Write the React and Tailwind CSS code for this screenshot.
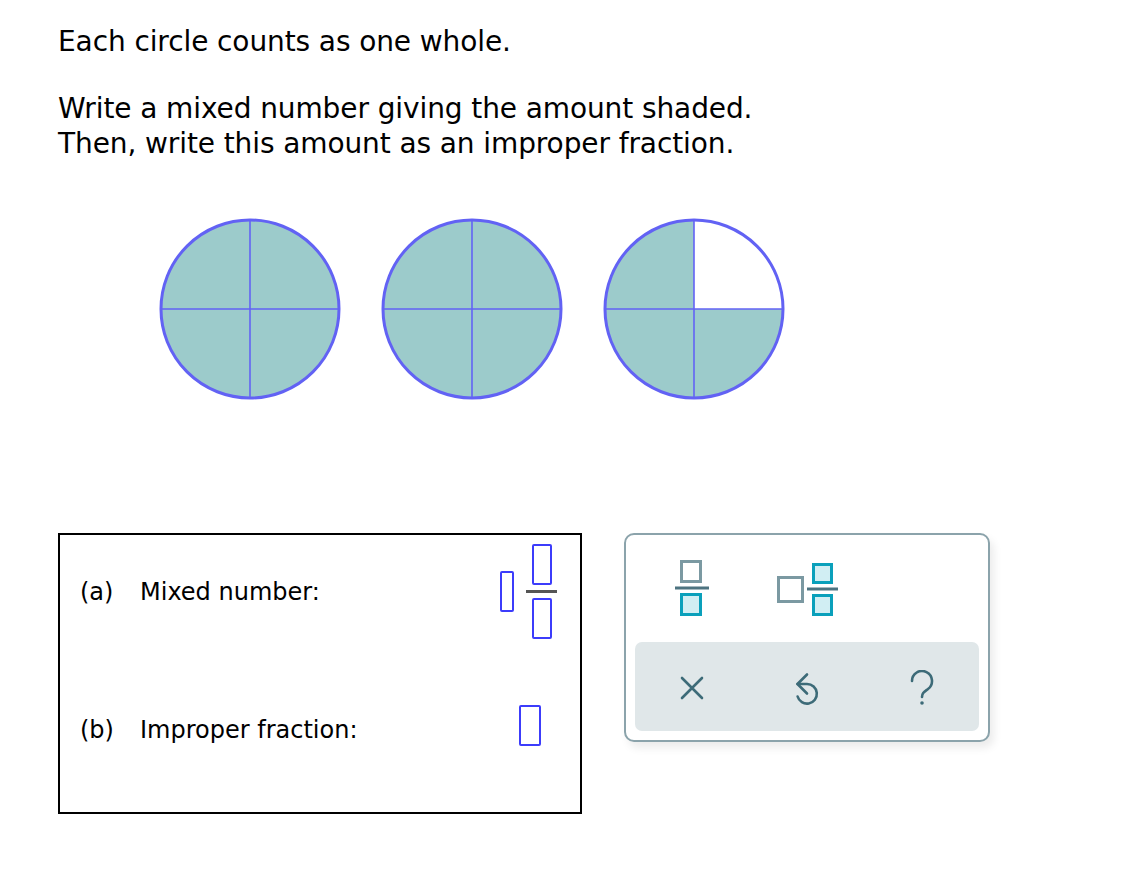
import React from 'react';

const Circle = ({ missing }) => (
  <svg width="182" height="182" viewBox="0 0 182 182">
    <circle cx="91" cy="91" r="89" fill="#9ccbcb" />
    {missing && <path d="M91 91 L91 2 A89 89 0 0 1 180 91 Z" fill="#ffffff" />}
    <line x1="91" y1="2" x2="91" y2="180" stroke="#6262f4" strokeWidth="1.6" />
    <line x1="2" y1="91" x2="180" y2="91" stroke="#6262f4" strokeWidth="1.6" />
    <circle cx="91" cy="91" r="89" fill="none" stroke="#6262f4" strokeWidth="3" />
  </svg>
);

const Slot = ({ className }) => (
  <div className={`border-[2.5px] border-[#3c3cfb] rounded-[2px] bg-white ${className}`} />
);

const FracKey = () => (
  <svg width="36" height="58" viewBox="0 0 36 58">
    <rect x="7.5" y="1.5" width="19" height="20" fill="#fff" stroke="#7b99a2" strokeWidth="3" />
    <line x1="1" y1="28" x2="35" y2="28" stroke="#4d7380" strokeWidth="3" />
    <rect x="7.5" y="34.5" width="19" height="20" fill="#d1eef3" stroke="#0aa0bb" strokeWidth="3" />
  </svg>
);

const MixedKey = () => (
  <svg width="62" height="54" viewBox="0 0 62 54">
    <rect x="1.5" y="14.5" width="24" height="24" fill="#fff" stroke="#7b99a2" strokeWidth="3" />
    <rect x="36.5" y="1.5" width="18" height="18" fill="#d1eef3" stroke="#0aa0bb" strokeWidth="3" />
    <line x1="30" y1="26" x2="61" y2="26" stroke="#4d7380" strokeWidth="3" />
    <rect x="36.5" y="32.5" width="18" height="19" fill="#d1eef3" stroke="#0aa0bb" strokeWidth="3" />
  </svg>
);

const iconStroke = '#3d6b78';

export default function App() {
  return (
    <div className="min-h-screen bg-white pl-[58px] pt-[24px] text-black" style={{ fontFamily: '"DejaVu Sans", Verdana, sans-serif' }}>
      <div className="text-[28px] leading-[35px] tracking-[-0.1px]">
        <p>Each circle counts as one whole.</p>
        <p className="mt-[32px]">Write a mixed number giving the amount shaded.</p>
        <p>Then, write this amount as an improper fraction.</p>
      </div>

      <div className="flex gap-[40px] ml-[101px] mt-[57px]">
        <Circle />
        <Circle />
        <Circle missing />
      </div>

      <div className="flex items-start gap-[42px] mt-[133px]">
        {/* answer box */}
        <div className="w-[524px] h-[281px] border-2 border-black pl-[20px] pt-[9px]">
          <div className="flex items-center h-[95px]">
            <div className="w-[420px] flex text-[24px]">
              <span className="w-[60px]">(a)</span>
              <span>Mixed number:</span>
            </div>
            <div className="flex items-center gap-[12px]">
              <Slot className="w-[14px] h-[41px]" />
              <div className="flex flex-col items-center gap-[5px]">
                <Slot className="w-[20px] h-[41px]" />
                <div className="w-[31px] h-[3px] bg-[#555]" />
                <Slot className="w-[20px] h-[41px]" />
              </div>
            </div>
          </div>
          <div className="flex items-center h-[41px] mt-[66px]">
            <div className="w-[439px] flex text-[24px] pt-[8px]">
              <span className="w-[60px]">(b)</span>
              <span>Improper fraction:</span>
            </div>
            <Slot className="w-[22px] h-[41px]" />
          </div>
        </div>

        {/* keypad */}
        <div className="w-[366px] h-[209px] border-2 border-[#8ba3ab] rounded-[10px] bg-white px-[9px] pb-[9px] shadow-[4px_6px_8px_rgba(0,0,0,0.08)] flex flex-col">
          <div className="grid grid-cols-3 h-[107px] items-center">
            <div className="flex justify-center"><FracKey /></div>
            <div className="flex justify-center pt-[2px] pl-[2px]"><MixedKey /></div>
            <div />
          </div>
          <div className="flex-1 grid grid-cols-3 items-center bg-[#e0e7e9] rounded-[7px]">
            <div className="flex justify-center pt-[2px]">
              <svg width="26" height="26" viewBox="0 0 26 26">
                <path d="M3 3 L23 23 M23 3 L3 23" stroke={iconStroke} strokeWidth="2.6" strokeLinecap="round" />
              </svg>
            </div>
            <div className="flex justify-center pt-[4px]">
              <svg width="30" height="34" viewBox="0 0 30 34">
                <path d="M15 2.5 L5.5 12 L15 21.5" fill="none" stroke={iconStroke} strokeWidth="2.6" strokeLinecap="round" strokeLinejoin="round" />
                <path d="M5.5 12 H15 A9.8 9.8 0 1 1 5.6 24.5" fill="none" stroke={iconStroke} strokeWidth="2.6" strokeLinecap="round" />
              </svg>
            </div>
            <div className="flex justify-center pt-[2px]">
              <svg width="26" height="36" viewBox="0 0 26 36">
                <path d="M3 11 A10 10 0 1 1 19 19 C15 22 13 23 13 27" fill="none" stroke={iconStroke} strokeWidth="2.6" strokeLinecap="round" />
                <circle cx="13" cy="33" r="1.8" fill={iconStroke} />
              </svg>
            </div>
          </div>
        </div>
      </div>
    </div>
  );
}
